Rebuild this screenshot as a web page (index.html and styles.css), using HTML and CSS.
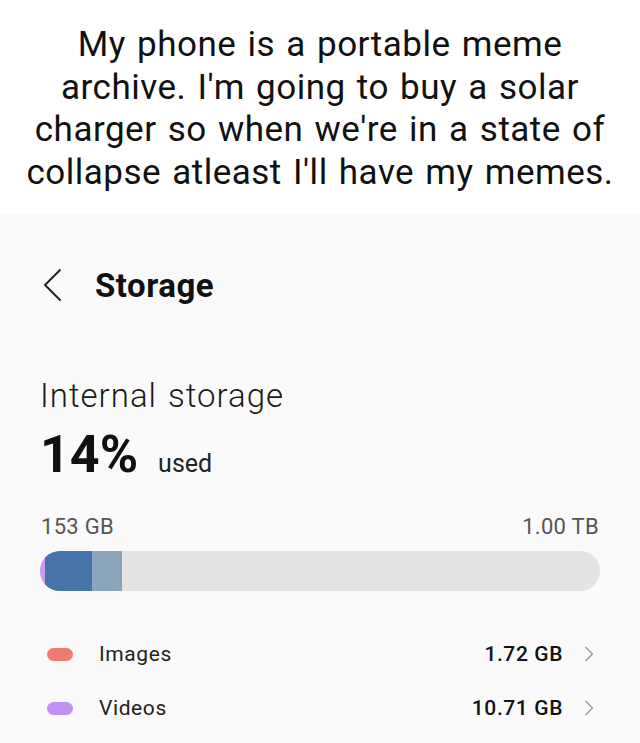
FILE: index.html
```html
<!DOCTYPE html>
<html>
<head>
<meta charset="utf-8">
<link rel="stylesheet" href="styles.css">
</head>
<body>
<div class="caption">My phone is a portable meme<br>archive. I'm going to buy a solar<br>charger so when we're in a state of<br>collapse atleast I'll have my memes.</div>
<div class="screen">
  <div class="header">
    <svg class="back" width="20" height="34" viewBox="0 0 20 34"><path d="M17.5 1.5 L2 17 L17.5 32.5" fill="none" stroke="#222" stroke-width="2"/></svg>
    <span class="title">Storage</span>
  </div>
  <div class="internal">Internal storage</div>
  <div class="usage"><span class="pct">14%</span><span class="used">used</span></div>
  <div class="sizes"><span>153 GB</span><span>1.00 TB</span></div>
  <div class="bar">
    <div class="seg seg-purple" style="width:0.9%"></div>
    <div class="seg seg-blue" style="width:8.4%"></div>
    <div class="seg seg-grey" style="width:5.4%"></div>
  </div>
  <div class="legend">
    <div class="row">
      <span class="pill pill-images"></span>
      <span class="label">Images</span>
      <span class="value">1.72 GB</span>
      <svg class="chev" width="10" height="16" viewBox="0 0 10 16"><path d="M1.5 1 L8.5 8 L1.5 15" fill="none" stroke="#9a9a9a" stroke-width="1.4"/></svg>
    </div>
    <div class="row">
      <span class="pill pill-videos"></span>
      <span class="label">Videos</span>
      <span class="value">10.71 GB</span>
      <svg class="chev" width="10" height="16" viewBox="0 0 10 16"><path d="M1.5 1 L8.5 8 L1.5 15" fill="none" stroke="#9a9a9a" stroke-width="1.4"/></svg>
    </div>
  </div>
</div>
</body>
</html>
```
FILE: styles.css
```css
html, body {
  margin: 0;
  padding: 0;
}
body {
  width: 640px;
  height: 743px;
  overflow: hidden;
  background: #fafafa;
  font-family: Roboto, "Noto Sans", sans-serif;
}
.caption {
  background: #fff;
  color: #111;
  font-size: 35px;
  line-height: 42.7px;
  letter-spacing: 0.5px;
  word-spacing: 2px;
  text-align: center;
  padding: 24px 0 19px;
  height: 171px;
  white-space: nowrap;
}
.screen {
  padding: 52px 40px 0;
}
.header {
  display: flex;
  align-items: flex-start;
  height: 40px;
}
.back {
  margin: 2px 0 0 3px;
  flex: none;
}
.title {
  margin-left: 32px;
  font-size: 33px;
  line-height: 40px;
  font-weight: 700;
  letter-spacing: 0.5px;
  color: #111;
}
.internal {
  margin-top: 70px;
  font-size: 33px;
  line-height: 40px;
  font-weight: 300;
  letter-spacing: 1px;
  word-spacing: 2px;
  color: #1a1a1a;
}
.usage {
  margin-top: 11px;
  display: flex;
  align-items: baseline;
  height: 56px;
}
.pct {
  font-size: 52px;
  line-height: 56px;
  font-weight: 700;
  color: #111;
}
.used {
  margin-left: 20px;
  font-size: 25px;
  color: #222;
}
.sizes {
  margin-top: 32px;
  display: flex;
  justify-content: space-between;
  font-size: 22px;
  line-height: 24px;
  letter-spacing: 0.3px;
  color: #555;
  padding: 0 1px 0 1px;
}
.bar {
  margin-top: 12px;
  height: 40px;
  border-radius: 20px;
  background: #e4e4e4;
  overflow: hidden;
  display: flex;
}
.seg {
  height: 100%;
}
.seg-purple { background: #c99af0; }
.seg-blue { background: #4674a9; }
.seg-grey { background: #8ba6bc; }
.legend {
  margin-top: 51px;
  display: flex;
  flex-direction: column;
  gap: 30px;
}
.row {
  display: flex;
  align-items: center;
  height: 24px;
  padding-left: 7px;
  padding-right: 6px;
}
.pill {
  width: 26px;
  height: 13px;
  border-radius: 7px;
  flex: none;
}
.pill-images { background: #ef7b6e; }
.pill-videos { background: #c290f0; }
.label {
  margin-left: 26px;
  font-size: 21px;
  line-height: 24px;
  letter-spacing: 0.6px;
  color: #222;
  flex: 1;
}
.value {
  font-size: 21px;
  line-height: 24px;
  font-weight: 500;
  letter-spacing: 0.6px;
  color: #111;
}
.chev {
  margin-left: 21px;
  flex: none;
}
```
